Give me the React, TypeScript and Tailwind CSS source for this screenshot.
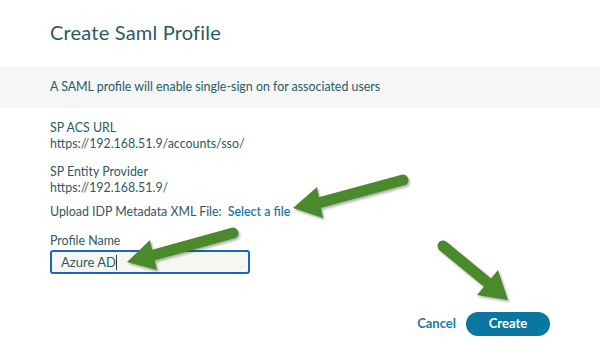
const font = { fontFamily: "Lato, 'Open Sans', sans-serif" };

function Arrow({ tail, tip, b1, b2 }: { tail: [number, number]; tip: [number, number]; b1: [number, number]; b2: [number, number] }) {
  // shaft ends at the middle of the barb base
  const base: [number, number] = [(b1[0] + b2[0]) / 2, (b1[1] + b2[1]) / 2];
  const head = `${tip[0]},${tip[1]} ${b1[0]},${b1[1]} ${base[0]},${base[1]} ${b2[0]},${b2[1]}`;
  return (
    <g>
      <g transform="translate(1.5,2)" opacity="0.35" filter="url(#blur)">
        <line x1={tail[0]} y1={tail[1]} x2={base[0]} y2={base[1]} stroke="#1d2e12" strokeWidth="11" strokeLinecap="round" />
        <polygon points={head} fill="#1d2e12" />
      </g>
      <line x1={tail[0]} y1={tail[1]} x2={base[0]} y2={base[1]} stroke="#4a8a2c" strokeWidth="11" strokeLinecap="round" />
      <polygon points={head} fill="#4a8a2c" />
    </g>
  );
}

export default function App() {
  return (
    <div className="relative w-[600px] h-[359px] bg-white text-[#2c5a62] overflow-hidden" style={font}>
      <div className="px-[50px] pt-[17px] pb-[19px]">
        <h1 className="text-[20px] leading-[30px] tracking-[0.2px]">Create Saml Profile</h1>
      </div>

      <div className="bg-[#f4f6f8] h-[42px] px-[50px] flex items-center text-[12.4px]">
        A SAML profile will enable single-sign on for associated users
      </div>

      <div className="px-[50px] pt-[12px] text-[12.4px] leading-[16px] flex flex-col">
        <div>SP ACS URL</div>
        <div>https://192.168.51.9/accounts/sso/</div>

        <div className="mt-[12px]">SP Entity Provider</div>
        <div>https://192.168.51.9/</div>

        <div className="mt-[8px] flex gap-[6px]">
          <span>Upload IDP Metadata XML File:</span>
          <span className="text-[#1a78a8] font-semibold">Select a file</span>
        </div>

        <div className="mt-[13px]">Profile Name</div>
        <div className="mt-[1px] w-[200px] h-[24px] border-2 border-[#1b63c6] rounded-[3px] bg-[#f5f8f2] flex items-center pl-[9px] text-[13px]">
          <span>Azure AD</span>
          <span className="w-px h-[15px] bg-[#2c3a40]" />
        </div>
      </div>

      <div className="absolute right-[50px] bottom-[23px] flex items-center gap-[10px]">
        <span className="text-[13px] font-bold text-[#1a78a8]">Cancel</span>
        <button className="w-[84px] h-[24px] rounded-full bg-[#0a77a3] text-white text-[13px] font-bold">Create</button>
      </div>

      <svg className="absolute inset-0 pointer-events-none" width="600" height="359">
        <defs>
          <filter id="blur">
            <feGaussianBlur stdDeviation="1.2" />
          </filter>
        </defs>
        <Arrow tail={[403, 180]} tip={[293, 208]} b1={[317, 187]} b2={[323, 218]} />
        <Arrow tail={[233, 233]} tip={[127, 262]} b1={[150, 240]} b2={[157, 270]} />
        <Arrow tail={[443, 246]} tip={[508, 300]} b1={[498, 270]} b2={[477, 295]} />
      </svg>
    </div>
  );
}
